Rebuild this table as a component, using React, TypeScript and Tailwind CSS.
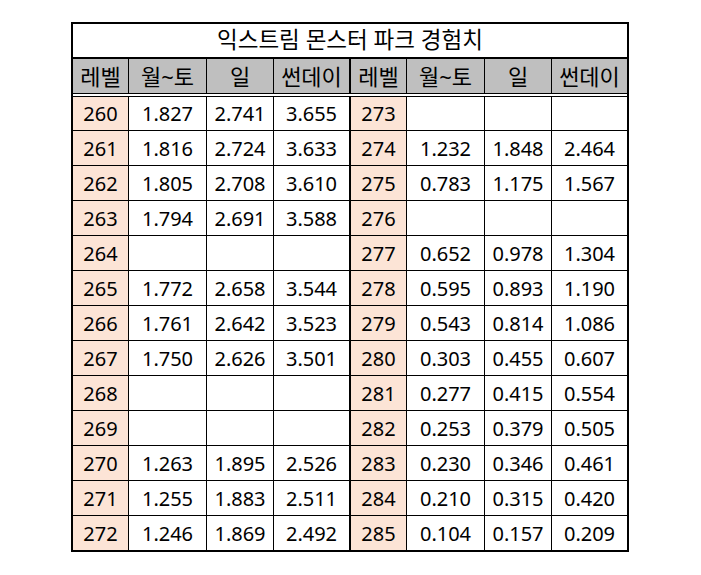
import React from 'react';

const left: [string, string, string, string][] = [
  ['260', '1.827', '2.741', '3.655'],
  ['261', '1.816', '2.724', '3.633'],
  ['262', '1.805', '2.708', '3.610'],
  ['263', '1.794', '2.691', '3.588'],
  ['264', '', '', ''],
  ['265', '1.772', '2.658', '3.544'],
  ['266', '1.761', '2.642', '3.523'],
  ['267', '1.750', '2.626', '3.501'],
  ['268', '', '', ''],
  ['269', '', '', ''],
  ['270', '1.263', '1.895', '2.526'],
  ['271', '1.255', '1.883', '2.511'],
  ['272', '1.246', '1.869', '2.492'],
];

const right: [string, string, string, string][] = [
  ['273', '', '', ''],
  ['274', '1.232', '1.848', '2.464'],
  ['275', '0.783', '1.175', '1.567'],
  ['276', '', '', ''],
  ['277', '0.652', '0.978', '1.304'],
  ['278', '0.595', '0.893', '1.190'],
  ['279', '0.543', '0.814', '1.086'],
  ['280', '0.303', '0.455', '0.607'],
  ['281', '0.277', '0.415', '0.554'],
  ['282', '0.253', '0.379', '0.505'],
  ['283', '0.230', '0.346', '0.461'],
  ['284', '0.210', '0.315', '0.420'],
  ['285', '0.104', '0.157', '0.209'],
];

const headers = ['레벨', '월~토', '일', '썬데이', '레벨', '월~토', '일', '썬데이'];

// column right borders: thin lines, thick one in the middle, none on the last
const colBorder = [
  'border-r',
  'border-r',
  'border-r',
  'border-r-2',
  'border-r',
  'border-r',
  'border-r',
  '',
];

const gridCols = 'grid grid-cols-[56px_78px_67px_77px_56px_78px_67px_75px]';

export default function App() {
  return (
    <div className="min-h-[575px] bg-white pt-[22px] font-['Noto_Sans','Noto_Sans_CJK_KR',sans-serif] text-[20px] leading-none text-black">
      <div className="ml-[71px] w-[558px] border-2 border-black">
        {/* Title */}
        <div className="flex h-[35px] items-center justify-center border-b-2 border-black text-[22.5px]">
          익스트림 몬스터 파크 경험치
        </div>

        {/* Header */}
        <div className={`${gridCols} h-[38px] border-b-4 border-double border-black bg-[#bfbfbf] bg-clip-padding text-[22px]`}>
          {headers.map((h, i) => (
            <div key={i} className={`flex items-center justify-center border-black ${colBorder[i]}`}>
              {h}
            </div>
          ))}
        </div>

        {/* Data rows */}
        {left.map((row, r) => {
          const cells = [...row, ...right[r]];
          const last = r === left.length - 1;
          const height = r === 0 ? 'h-[34px]' : last ? 'h-[34px]' : 'h-[35px]';
          return (
            <div key={r} className={`${gridCols} ${height} ${last ? '' : 'border-b border-black'}`}>
              {cells.map((c, i) => (
                <div
                  key={i}
                  className={`flex items-center justify-center border-black pt-px ${colBorder[i]} ${
                    i === 0 || i === 4 ? 'bg-[#fce4d6]' : ''
                  }`}
                >
                  {c}
                </div>
              ))}
            </div>
          );
        })}
      </div>
    </div>
  );
}
